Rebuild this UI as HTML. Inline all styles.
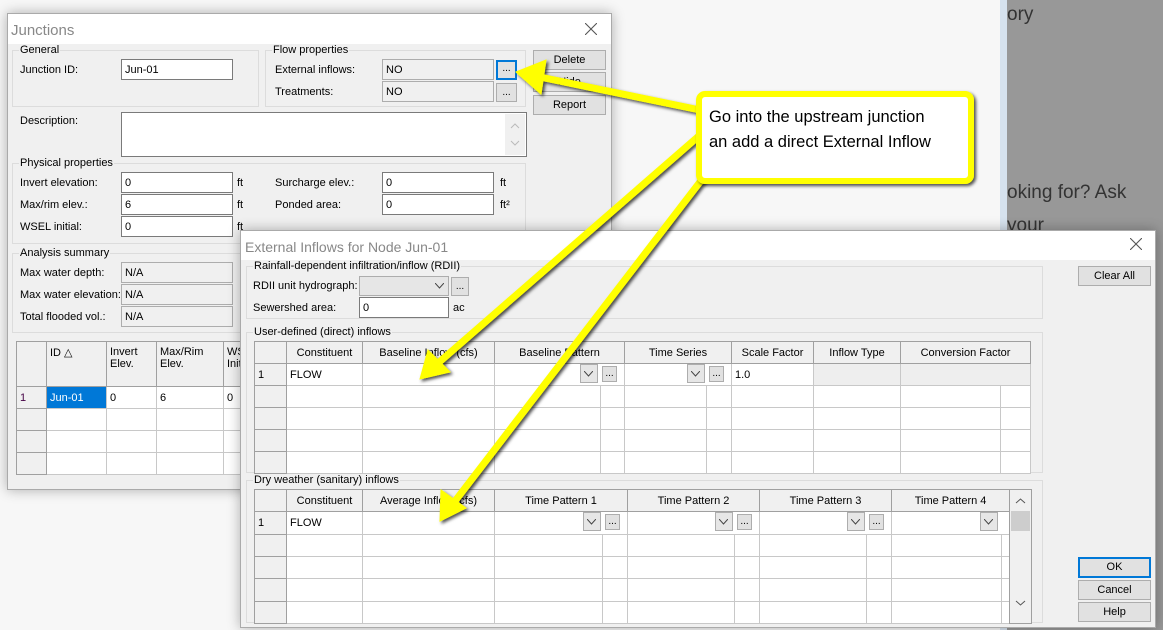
<!DOCTYPE html>
<html><head><meta charset="utf-8"><style>
*{box-sizing:border-box;margin:0;padding:0}
body{width:1163px;height:630px;overflow:hidden;background:#f7f7f7;font-family:"Liberation Sans",sans-serif;font-size:11px;color:#000;position:relative}
.a{position:absolute}
.t{position:absolute;white-space:nowrap;font-size:11px;line-height:13px}
.grp{position:absolute;border:1px solid #dcdcdc}
.lab{position:absolute;top:-7px;left:6px;background:#f0f0f0;padding:0 1px;font-size:11px;line-height:13px}
.in{position:absolute;background:#fff;border:1px solid #7a7a7a;padding:3px 3px;font-size:11px;line-height:14px}
.ro{background:#f0f0f0;border:1px solid #adadad}
.btn{position:absolute;background:#e1e1e1;border:1px solid #adadad;text-align:center;font-size:11px;line-height:18px}
.db{position:absolute;background:#e1e1e1;border:1px solid #adadad;text-align:center;font-size:10px;line-height:13px}
.dd{position:absolute;background:#e6e6e6;border:1px solid #adadad}
.dd svg{position:absolute;right:4px;top:50%;margin-top:-3px}
.dlg{position:absolute;background:#f0f0f0;border:1px solid #aaa;box-shadow:0 0 12px rgba(0,0,0,.3)}
.tb{position:absolute;left:0;top:0;right:0;background:#fff}
table{border-collapse:collapse;position:absolute;table-layout:fixed;background:#fff}
td{border:1px solid #c8c8c8;font-size:11px;padding:0 3px;overflow:hidden;white-space:nowrap;height:22px}
td.h{background:#f0f0f0;border-color:#a0a0a0;text-align:center}
td.r{background:#f0f0f0;border-color:#a0a0a0}
</style></head><body>

<div class="a" style="left:1000px;top:0;width:7px;height:630px;background:#d6e2ee"></div>
<div class="a" style="left:1007px;top:0;width:156px;height:630px;background:#989898"></div>
<div class="t" style="left:1007px;top:3px;font-size:19px;line-height:24px;color:#333">ory</div>
<div class="t" style="left:1007px;top:181px;font-size:19px;line-height:24px;color:#333">oking for? Ask</div>
<div class="t" style="left:1007px;top:214px;font-size:19px;line-height:24px;color:#333">your</div>

<div class="dlg" style="left:7px;top:13px;width:605px;height:477px">
 <div class="tb" style="height:30px"><div class="t" style="left:3px;top:8px;font-size:15px;line-height:17px;color:#888">Junctions</div>
 <svg class="a" style="left:577px;top:9px" width="12" height="12"><path d="M0 0L12 12M12 0L0 12" stroke="#555" stroke-width="1.1"/></svg></div>
</div>
<div class="grp" style="left:12px;top:50px;width:247px;height:57px"><span class="lab">General</span></div>
<div class="t" style="left:20px;top:64px">Junction ID:</div>
<div class="in" style="left:121px;top:59px;width:112px;height:21px">Jun-01</div>
<div class="grp" style="left:265px;top:50px;width:261px;height:57px"><span class="lab">Flow properties</span></div>
<div class="t" style="left:275px;top:64px">External inflows:</div>
<div class="in ro" style="left:382px;top:59px;width:112px;height:21px">NO</div>
<div class="db" style="left:496px;top:60px;width:21px;height:20px;border:2px solid #0078d7;line-height:14px">...</div>
<div class="t" style="left:275px;top:86px">Treatments:</div>
<div class="in ro" style="left:382px;top:81px;width:112px;height:21px">NO</div>
<div class="db" style="left:496px;top:83px;width:21px;height:19px;line-height:17px">...</div>
<div class="btn" style="left:533px;top:50px;width:73px;height:20px">Delete</div>
<div class="btn" style="left:533px;top:72px;width:73px;height:20px">Hide</div>
<div class="btn" style="left:533px;top:95px;width:73px;height:20px">Report</div>
<div class="t" style="left:20px;top:115px">Description:</div>
<div class="in" style="left:121px;top:112px;width:406px;height:45px"></div>
<div class="a" style="left:505px;top:114px;width:20px;height:41px;background:#f0f0f0">
<svg width="20" height="41"><path d="M6 14L10 10L14 14M6 27L10 31L14 27" stroke="#bbb" fill="none"/></svg></div>
<div class="grp" style="left:12px;top:163px;width:514px;height:81px"><span class="lab">Physical properties</span></div>
<div class="t" style="left:20px;top:177px">Invert elevation:</div>
<div class="in" style="left:121px;top:172px;width:112px;height:21px">0</div><div class="t" style="left:237px;top:177px">ft</div>
<div class="t" style="left:20px;top:199px">Max/rim elev.:</div>
<div class="in" style="left:121px;top:194px;width:112px;height:21px">6</div><div class="t" style="left:237px;top:199px">ft</div>
<div class="t" style="left:20px;top:221px">WSEL initial:</div>
<div class="in" style="left:121px;top:216px;width:112px;height:21px">0</div><div class="t" style="left:237px;top:221px">ft</div>
<div class="t" style="left:275px;top:177px">Surcharge elev.:</div>
<div class="in" style="left:382px;top:172px;width:112px;height:21px">0</div><div class="t" style="left:500px;top:177px">ft</div>
<div class="t" style="left:275px;top:199px">Ponded area:</div>
<div class="in" style="left:382px;top:194px;width:112px;height:21px">0</div><div class="t" style="left:500px;top:199px">ft²</div>
<div class="grp" style="left:12px;top:253px;width:514px;height:80px"><span class="lab">Analysis summary</span></div>
<div class="t" style="left:20px;top:267px">Max water depth:</div>
<div class="in ro" style="left:121px;top:262px;width:112px;height:21px">N/A</div>
<div class="t" style="left:20px;top:289px">Max water elevation:</div>
<div class="in ro" style="left:121px;top:284px;width:112px;height:21px">N/A</div>
<div class="t" style="left:20px;top:311px">Total flooded vol.:</div>
<div class="in ro" style="left:121px;top:306px;width:112px;height:21px">N/A</div>
<table style="left:16px;top:341px;width:300px;border:1px solid #7a9cbd">
<col style="width:30px"><col style="width:60px"><col style="width:50px"><col style="width:67px"><col style="width:93px">
<tr><td class="r" style="height:45px"></td><td class="r" style="vertical-align:top;padding-top:4px">ID △</td><td class="r" style="vertical-align:top;padding-top:4px;white-space:normal">Invert<br>Elev.</td><td class="r" style="vertical-align:top;padding-top:4px">Max/Rim<br>Elev.</td><td class="r" style="vertical-align:top;padding-top:4px">WSEL<br>Initial</td></tr>
<tr><td class="r" style="color:#404">1</td><td style="background:#0078d7;color:#fff">Jun-01</td><td>0</td><td>6</td><td>0</td></tr>
<tr><td class="r"></td><td></td><td></td><td></td><td></td></tr>
<tr><td class="r"></td><td></td><td></td><td></td><td></td></tr>
<tr><td class="r" style="height:12px"></td><td style="height:12px"></td><td></td><td></td><td></td></tr>
</table>

<div class="dlg" style="left:240px;top:230px;width:916px;height:398px">
 <div class="tb" style="height:29px"><div class="t" style="left:4px;top:8px;font-size:14px;line-height:16px;color:#888">External Inflows for Node Jun-01</div>
 <svg class="a" style="left:889px;top:7px" width="12" height="12"><path d="M0 0L12 12M12 0L0 12" stroke="#555" stroke-width="1.1"/></svg></div>
</div>
<div class="grp" style="left:246px;top:266px;width:797px;height:53px"><span class="lab">Rainfall-dependent infiltration/inflow (RDII)</span></div>
<div class="t" style="left:253px;top:280px">RDII unit hydrograph:</div>
<div class="dd" style="left:359px;top:276px;width:90px;height:20px"><svg width="9" height="6"><path d="M0 0L4.5 5L9 0" stroke="#444" fill="none"/></svg></div>
<div class="db" style="left:451px;top:277px;width:18px;height:19px;line-height:17px">...</div>
<div class="t" style="left:253px;top:302px">Sewershed area:</div>
<div class="in" style="left:359px;top:297px;width:90px;height:21px">0</div>
<div class="t" style="left:453px;top:302px">ac</div>
<div class="grp" style="left:246px;top:332px;width:797px;height:141px"><span class="lab">User-defined (direct) inflows</span></div>
<table style="left:254px;top:341px;width:776px;border:1px solid #7a9cbd">
<col style="width:32px"><col style="width:76px"><col style="width:132px"><col style="width:106px"><col style="width:24px"><col style="width:82px"><col style="width:25px"><col style="width:82px"><col style="width:87px"><col style="width:100px"><col style="width:30px">
<tr><td class="r" style="height:21px"></td><td class="h">Constituent</td><td class="h">Baseline Inflow (cfs)</td><td class="h" colspan="2">Baseline Pattern</td><td class="h" colspan="2">Time Series</td><td class="h">Scale Factor</td><td class="h">Inflow Type</td><td class="h" colspan="2">Conversion Factor</td></tr>
<tr><td class="r">1</td><td>FLOW</td><td></td><td colspan="2"></td><td colspan="2"></td><td>1.0</td><td style="background:#eee"></td><td colspan="2" style="background:#eee"></td></tr>
<tr><td class="r"></td><td></td><td></td><td></td><td></td><td></td><td></td><td></td><td></td><td></td><td></td></tr>
<tr><td class="r"></td><td></td><td></td><td></td><td></td><td></td><td></td><td></td><td></td><td></td><td></td></tr>
<tr><td class="r"></td><td></td><td></td><td></td><td></td><td></td><td></td><td></td><td></td><td></td><td></td></tr>
<tr><td class="r" style="height:10px"></td><td style="height:10px"></td><td></td><td></td><td></td><td></td><td></td><td></td><td></td><td></td><td></td></tr>
</table>
<div class="dd" style="left:580px;top:364px;width:18px;height:19px"><svg width="9" height="6"><path d="M0 0L4.5 5L9 0" stroke="#444" fill="none"/></svg></div><div class="db" style="left:602px;top:366px;width:15px;height:16px">...</div>
<div class="dd" style="left:687px;top:364px;width:18px;height:19px"><svg width="9" height="6"><path d="M0 0L4.5 5L9 0" stroke="#444" fill="none"/></svg></div><div class="db" style="left:709px;top:366px;width:15px;height:16px">...</div>

<div class="grp" style="left:246px;top:480px;width:797px;height:143px"><span class="lab">Dry weather (sanitary) inflows</span></div>
<table style="left:254px;top:489px;width:777px;border:1px solid #7a9cbd">
<col style="width:32px"><col style="width:76px"><col style="width:132px"><col style="width:108px"><col style="width:25px"><col style="width:107px"><col style="width:25px"><col style="width:107px"><col style="width:25px"><col style="width:110px"><col style="width:8px"><col style="width:22px">
<tr><td class="r" style="height:21px"></td><td class="h">Constituent</td><td class="h">Average Inflow (cfs)</td><td class="h" colspan="2">Time Pattern 1</td><td class="h" colspan="2">Time Pattern 2</td><td class="h" colspan="2">Time Pattern 3</td><td class="h" colspan="2">Time Pattern 4</td><td rowspan="6" style="background:#f0f0f0;border-color:#a0a0a0;vertical-align:top;padding:0"><svg width="21" height="130"><path d="M6 13L10.5 9L15 13M6 111L10.5 115L15 111" stroke="#555" fill="none"/><rect x="1" y="21" width="19" height="20" fill="#cdcdcd"/></svg></td></tr>
<tr><td class="r">1</td><td>FLOW</td><td></td><td colspan="2"></td><td colspan="2"></td><td colspan="2"></td><td colspan="2"></td></tr>
<tr><td class="r"></td><td></td><td></td><td></td><td></td><td></td><td></td><td></td><td></td><td></td><td></td></tr>
<tr><td class="r"></td><td></td><td></td><td></td><td></td><td></td><td></td><td></td><td></td><td></td><td></td></tr>
<tr><td class="r"></td><td></td><td></td><td></td><td></td><td></td><td></td><td></td><td></td><td></td><td></td></tr>
<tr><td class="r" style="height:17px"></td><td style="height:17px"></td><td></td><td></td><td></td><td></td><td></td><td></td><td></td><td></td><td></td></tr>
</table>
<div class="dd" style="left:583px;top:512px;width:18px;height:19px"><svg width="9" height="6"><path d="M0 0L4.5 5L9 0" stroke="#444" fill="none"/></svg></div><div class="db" style="left:605px;top:514px;width:15px;height:16px">...</div>
<div class="dd" style="left:715px;top:512px;width:18px;height:19px"><svg width="9" height="6"><path d="M0 0L4.5 5L9 0" stroke="#444" fill="none"/></svg></div><div class="db" style="left:737px;top:514px;width:15px;height:16px">...</div>
<div class="dd" style="left:847px;top:512px;width:18px;height:19px"><svg width="9" height="6"><path d="M0 0L4.5 5L9 0" stroke="#444" fill="none"/></svg></div><div class="db" style="left:869px;top:514px;width:15px;height:16px">...</div>
<div class="dd" style="left:980px;top:512px;width:18px;height:19px"><svg width="9" height="6"><path d="M0 0L4.5 5L9 0" stroke="#444" fill="none"/></svg></div>

<div class="btn" style="left:1078px;top:266px;width:73px;height:20px">Clear All</div>
<div class="btn" style="left:1078px;top:557px;width:73px;height:21px;border:2px solid #0078d7;line-height:16px">OK</div>
<div class="btn" style="left:1078px;top:580px;width:73px;height:20px">Cancel</div>
<div class="btn" style="left:1078px;top:602px;width:73px;height:20px">Help</div>

<svg class="a" style="left:0;top:0" width="1163" height="630">
<defs><filter id="s" x="-10%" y="-10%" width="130%" height="130%"><feDropShadow dx="2" dy="2" stdDeviation="1.5" flood-color="#000" flood-opacity=".7"/></filter></defs>
<g filter="url(#s)" fill="#ffff00" stroke="#ffff00" stroke-width="7" stroke-linecap="round">
<line x1="700" y1="110" x2="535" y2="76"/>
<polygon stroke-width="1" points="516,72 546,60 541,94"/>
<line x1="700" y1="135" x2="437" y2="364"/>
<polygon stroke-width="1" points="420,379 428,350 450,372"/>
<line x1="703" y1="178" x2="452" y2="505"/>
<polygon stroke-width="1" points="440,521 441,490 466,508"/>
</g>
<rect x="699" y="94" width="272" height="87" rx="6" fill="#fff" stroke="#ffff00" stroke-width="6" filter="url(#s)"/>
<text x="709" y="122" font-family="Liberation Sans,sans-serif" font-size="16.5" fill="#000">Go into the upstream junction</text>
<text x="709" y="147" font-family="Liberation Sans,sans-serif" font-size="16.5" fill="#000">an add a direct External Inflow</text>
</svg>
</body></html>
